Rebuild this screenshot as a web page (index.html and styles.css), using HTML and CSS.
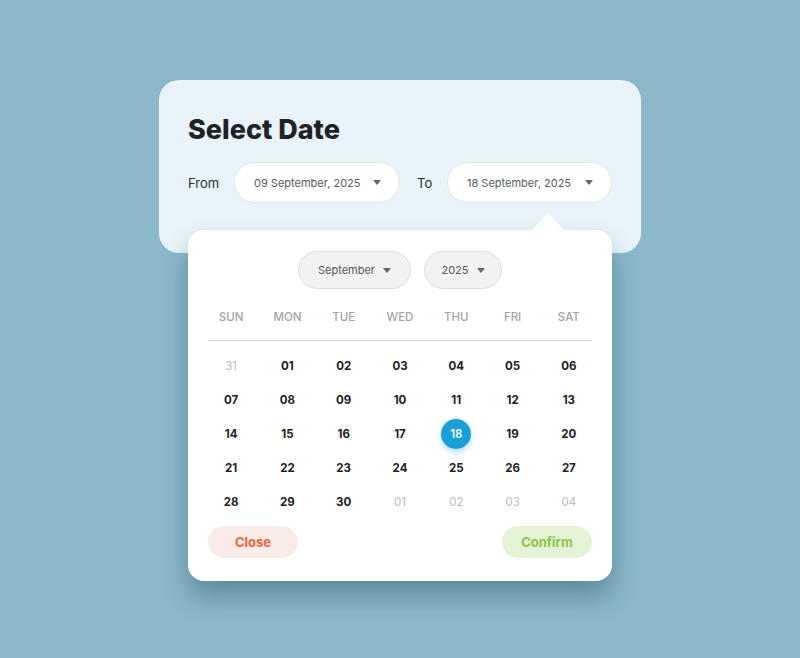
FILE: index.html
```html
<!DOCTYPE html>
<html lang="en">
<head>
  <meta charset="UTF-8" />
  <meta name="viewport" content="width=device-width, initial-scale=1.0"/>
  <title>Select Date</title>
  <link rel="stylesheet" href="styles.css">
</head>
<body>

  <div class="picker">
    <header class="range-card">
      <h1>Select Date</h1>
      <div class="range-row">
        <span class="range-label">From</span>
        <button class="date-pill">09 September, 2025 <span class="caret"></span></button>
        <span class="range-label to">To</span>
        <button class="date-pill">18 September, 2025 <span class="caret"></span></button>
      </div>
    </header>

    <main class="calendar">
      <span class="notch"></span>

      <div class="selects">
        <button class="select-pill">September <span class="caret"></span></button>
        <button class="select-pill">2025 <span class="caret"></span></button>
      </div>

      <div class="weekdays">
        <span>SUN</span><span>MON</span><span>TUE</span><span>WED</span><span>THU</span><span>FRI</span><span>SAT</span>
      </div>
      <div class="divider"></div>

      <div class="days">
        <span class="muted">31</span><span>01</span><span>02</span><span>03</span><span>04</span><span>05</span><span>06</span>
        <span>07</span><span>08</span><span>09</span><span>10</span><span>11</span><span>12</span><span>13</span>
        <span>14</span><span>15</span><span>16</span><span>17</span><span class="selected">18</span><span>19</span><span>20</span>
        <span>21</span><span>22</span><span>23</span><span>24</span><span>25</span><span>26</span><span>27</span>
        <span>28</span><span>29</span><span>30</span><span class="muted">01</span><span class="muted">02</span><span class="muted">03</span><span class="muted">04</span>
      </div>

      <div class="actions">
        <button class="btn btn-close">Close</button>
        <button class="btn btn-confirm">Confirm</button>
      </div>
    </main>
  </div>

</body>
</html>
```

FILE: styles.css
```css
* {
  box-sizing: border-box;
}

body {
  margin: 0;
  min-height: 658px;
  background: #8bb9c9;
  font-family: "Inter", "Noto Sans", sans-serif;
  color: #1f2328;
}

button {
  font-family: inherit;
  cursor: pointer;
}

.picker {
  width: 482px;
  margin: 0 auto;
  padding-top: 80px;
}

/* top card with the range inputs */
.range-card {
  background: #e8f4f9;
  border-radius: 20px;
  padding: 34px 29px 50px;
  height: 173px;
}

.range-card h1 {
  margin: 0;
  font-size: 27px;
  line-height: 32px;
  font-weight: 800;
  letter-spacing: 0;
  color: #1f2328;
}

.range-row {
  display: flex;
  align-items: center;
  margin-top: 16px;
}

.range-label {
  font-size: 13px;
  color: #2a2e33;
  width: 46px;
}

.range-label.to {
  width: 30px;
  margin-left: 17px;
}

.date-pill {
  display: flex;
  align-items: center;
  justify-content: space-between;
  width: 166px;
  height: 41px;
  padding: 0 18px 0 19px;
  background: #fff;
  border: 1px solid #dfe6ea;
  border-radius: 21px;
  font-size: 11px;
  color: #555b60;
}

.date-pill:last-child {
  width: 165px;
}

.caret {
  display: inline-block;
  width: 0;
  height: 0;
  border-left: 4.5px solid transparent;
  border-right: 4.5px solid transparent;
  border-top: 5px solid #666;
  margin-left: 8px;
}

/* calendar popup */
.calendar {
  position: relative;
  margin: -23px 29px 0;
  background: #fff;
  border-radius: 16px;
  padding: 21px 15px 23px;
  box-shadow: 0 16px 26px rgba(30, 70, 90, 0.4);
}

.notch {
  position: absolute;
  top: -17px;
  left: 344px;
  width: 0;
  height: 0;
  border-left: 16px solid transparent;
  border-right: 16px solid transparent;
  border-bottom: 17px solid #fff;
}

.selects {
  display: flex;
  justify-content: center;
  gap: 13px;
}

.select-pill {
  display: flex;
  align-items: center;
  justify-content: center;
  height: 38px;
  padding: 0 16px;
  background: #f2f2f2;
  border: 1px solid #dedede;
  border-radius: 19px;
  font-size: 11px;
  color: #555;
}

.select-pill:first-child {
  width: 113px;
}

.select-pill:last-child {
  width: 78px;
}

.weekdays,
.days {
  display: grid;
  grid-template-columns: repeat(7, 1fr);
  text-align: center;
}

.weekdays {
  margin-top: 18px;
  line-height: 20px;
  font-size: 11.5px;
  font-weight: 500;
  color: #a3a3a3;
}

.divider {
  height: 1px;
  background: #d9d9d9;
  margin: 13px 5px 0;
}

.days {
  margin-top: 8px;
}

.days span {
  display: flex;
  align-items: center;
  justify-content: center;
  height: 34px;
  font-size: 11.5px;
  font-weight: 700;
  color: #222;
}

.days .muted {
  font-weight: 400;
  color: #bcbcbc;
}

.days .selected {
  width: 30px;
  height: 30px;
  margin: 2px auto;
  border-radius: 50%;
  background: #1a9ed8;
  color: #fff;
  font-weight: 600;
  box-shadow: 0 3px 6px rgba(26, 158, 216, 0.35);
}

.actions {
  display: flex;
  justify-content: space-between;
  margin: 7px 5px 0;
}

.btn {
  width: 90px;
  height: 32px;
  border: none;
  border-radius: 16px;
  font-size: 13px;
  font-weight: 700;
}

.btn-close {
  background: #f9ece8;
  color: #e7653b;
}

.btn-confirm {
  background: #e4f2d5;
  color: #8cc641;
}
```
